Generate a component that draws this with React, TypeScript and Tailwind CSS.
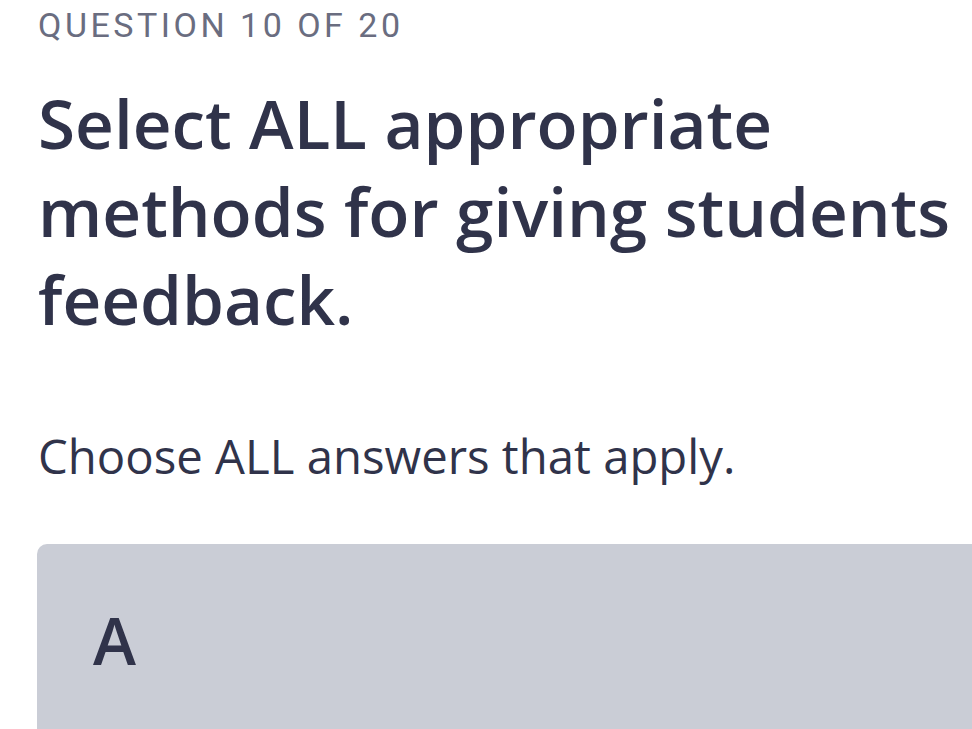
import React from 'react';

const App = () => {
  return (
    <div className="w-[972px] h-[729px] overflow-hidden bg-white text-[#30334a]">
      <div className="pl-[38px]">
        <p className="pt-[5px] text-[34px] leading-[40px] text-[#6a6d80] font-['Roboto',sans-serif] tracking-[3.5px]">
          QUESTION 10 OF 20
        </p>
        <h1 className="mt-[34px] text-[67.4px] leading-[88px] font-semibold font-['Open_Sans',sans-serif]">
          Select ALL appropriate methods for giving students feedback.
        </h1>
        <p className="mt-[80px] text-[47.3px] leading-[66px] font-['Open_Sans',sans-serif]">
          Choose ALL answers that apply.
        </p>
        <div className="mt-[55px] ml-[-1px] h-[300px] rounded-tl-[10px] bg-[#cacdd6] pl-[56px] pt-[51px]">
          <span className="text-[65px] leading-[90px] font-semibold font-['Open_Sans',sans-serif]">A</span>
        </div>
      </div>
    </div>
  );
};

export default App;
